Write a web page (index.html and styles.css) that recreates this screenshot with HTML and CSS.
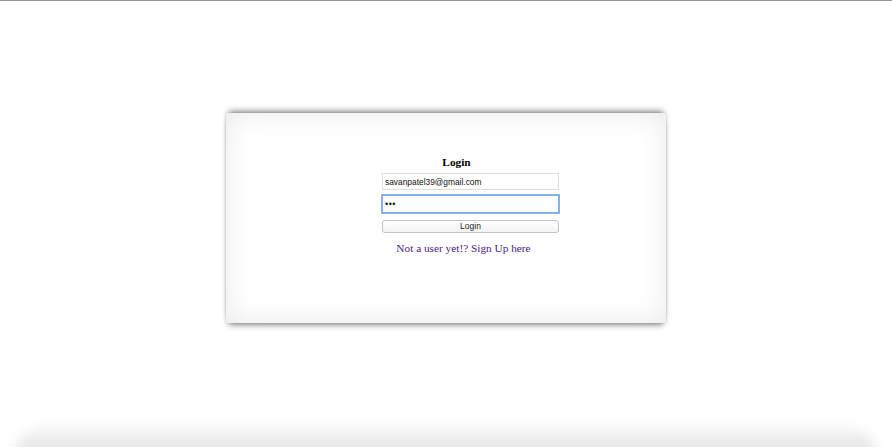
FILE: index.html
```html
<!DOCTYPE html>
<html lang="en">
<head>
    <meta charset="UTF-8">
    <meta name="viewport" content="width=device-width, initial-scale=1.0">
    <title>Login</title>
    <link rel="stylesheet" href="styles.css">
</head>
<body>
    <div class="topline"></div>

    <main class="card">
        <form class="login-form" id="loginForm">
            <h3 class="title">Login</h3>
            <input class="field" type="email" name="email" value="savanpatel39@gmail.com">
            <input class="field focused" type="password" name="password" value="abc" autofocus>
            <input class="btn" type="submit" value="Login">
            <a class="signup" href="#">Not a user yet!? Sign Up here</a>
        </form>
    </main>

    <footer class="bottom-box"></footer>
</body>
</html>
```

FILE: styles.css
```css
html, body {
    height: 100%;
}

body {
    margin: 0;
    background-color: white;
    font-family: 'Liberation Serif', 'Times New Roman', serif;
    overflow: hidden;
}

.topline {
    height: 1px;
    background-color: #979797;
}

.card {
    width: 440px;
    height: 210px;
    margin: 112px auto 0;
    background-color: #fff;
    box-shadow: 0 5px 6px -3px rgba(0, 0, 0, 0.45),
                0 -5px 6px -3px rgba(0, 0, 0, 0.45),
                0 0 3px rgba(0, 0, 0, 0.15),
                inset 0 0 28px rgba(0, 0, 0, 0.09);
    overflow: hidden;
}

.login-form {
    width: 177px;
    margin-left: 156px;
    padding-top: 42px;
    display: flex;
    flex-direction: column;
}

.title {
    margin: 0 0 4px;
    padding-right: 28px;
    font-size: 11.3px;
    font-weight: bold;
    text-align: center;
    line-height: 14px;
    color: #000;
}

.field {
    box-sizing: border-box;
    width: 177px;
    height: 17px;
    margin: 0 0 5px;
    padding: 0 2px;
    border: 1px solid #dcdcdc;
    border-radius: 0;
    font-family: 'Liberation Sans', Arial, sans-serif;
    font-size: 8.4px;
    color: #111;
    outline: none;
}

.field.focused {
    height: 18px;
    border: 1px solid #7fa9ea;
    box-shadow: 0 0 0 1px #8db5f2;
    font-size: 9px;
    letter-spacing: 0.5px;
}

.btn {
    box-sizing: border-box;
    width: 177px;
    height: 13px;
    margin: 2px 0 0;
    padding: 0;
    border: 1px solid #c4c4c4;
    border-radius: 3px;
    background: linear-gradient(#ffffff, #f3f3f3);
    font-family: 'Liberation Sans', Arial, sans-serif;
    font-size: 8.5px;
    line-height: 11px;
    color: #222;
}

.signup {
    margin-top: 9px;
    padding-right: 14px;
    font-size: 11.3px;
    text-align: center;
    color: #4e1a85;
    text-decoration: none;
    white-space: nowrap;
}

.bottom-box {
    height: 40px;
    margin: 102px 16px 0;
    background: linear-gradient(#fcfcfc, #e8e8e8 18px);
    border-radius: 30px 30px 0 0;
    filter: blur(6px);
}
```
